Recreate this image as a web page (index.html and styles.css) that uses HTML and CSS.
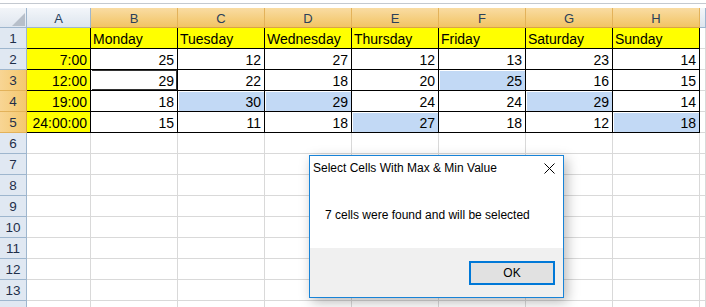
FILE: index.html
```html
<!DOCTYPE html>
<html>
<head>
<meta charset="utf-8">
<link rel="stylesheet" href="styles.css">
</head>
<body>
<div class="top"><div class="line"></div></div>
<div class="sheet">
  <div class="corner"><svg width="13" height="13" viewBox="0 0 13 13"><polygon points="13,0 13,13 0,13" fill="#b7bfca"/></svg></div>
  <div class="ch">A</div><div class="ch on">B</div><div class="ch on">C</div><div class="ch on">D</div><div class="ch on">E</div><div class="ch on">F</div><div class="ch on">G</div><div class="ch on">H</div><div class="ch last"></div>

  <div class="rh">1</div>
  <div class="d y"></div><div class="d y">Monday</div><div class="d y">Tuesday</div><div class="d y">Wednesday</div><div class="d y">Thursday</div><div class="d y">Friday</div><div class="d y">Saturday</div><div class="d y">Sunday</div><div class="c"></div>

  <div class="rh">2</div>
  <div class="d y r">7:00</div><div class="d r">25</div><div class="d r">12</div><div class="d r">27</div><div class="d r">12</div><div class="d r">13</div><div class="d r">23</div><div class="d r">14</div><div class="c"></div>

  <div class="rh on">3</div>
  <div class="d y r">12:00</div><div class="d r act">29</div><div class="d r">22</div><div class="d r">18</div><div class="d r">20</div><div class="d r s">25</div><div class="d r">16</div><div class="d r">15</div><div class="c"></div>

  <div class="rh on">4</div>
  <div class="d y r">19:00</div><div class="d r">18</div><div class="d r s">30</div><div class="d r s">29</div><div class="d r">24</div><div class="d r">24</div><div class="d r s">29</div><div class="d r">14</div><div class="c"></div>

  <div class="rh on">5</div>
  <div class="d y r">24:00:00</div><div class="d r">15</div><div class="d r">11</div><div class="d r">18</div><div class="d r s">27</div><div class="d r">18</div><div class="d r">12</div><div class="d r s">18</div><div class="c"></div>

  <div class="rh">6</div><div class="c"></div><div class="c"></div><div class="c"></div><div class="c"></div><div class="c"></div><div class="c"></div><div class="c"></div><div class="c"></div><div class="c"></div>
  <div class="rh">7</div><div class="c"></div><div class="c"></div><div class="c"></div><div class="c"></div><div class="c"></div><div class="c"></div><div class="c"></div><div class="c"></div><div class="c"></div>
  <div class="rh">8</div><div class="c"></div><div class="c"></div><div class="c"></div><div class="c"></div><div class="c"></div><div class="c"></div><div class="c"></div><div class="c"></div><div class="c"></div>
  <div class="rh">9</div><div class="c"></div><div class="c"></div><div class="c"></div><div class="c"></div><div class="c"></div><div class="c"></div><div class="c"></div><div class="c"></div><div class="c"></div>
  <div class="rh">10</div><div class="c"></div><div class="c"></div><div class="c"></div><div class="c"></div><div class="c"></div><div class="c"></div><div class="c"></div><div class="c"></div><div class="c"></div>
  <div class="rh">11</div><div class="c"></div><div class="c"></div><div class="c"></div><div class="c"></div><div class="c"></div><div class="c"></div><div class="c"></div><div class="c"></div><div class="c"></div>
  <div class="rh">12</div><div class="c"></div><div class="c"></div><div class="c"></div><div class="c"></div><div class="c"></div><div class="c"></div><div class="c"></div><div class="c"></div><div class="c"></div>
  <div class="rh">13</div><div class="c"></div><div class="c"></div><div class="c"></div><div class="c"></div><div class="c"></div><div class="c"></div><div class="c"></div><div class="c"></div><div class="c"></div>
  <div class="rh"></div><div class="c"></div><div class="c"></div><div class="c"></div><div class="c"></div><div class="c"></div><div class="c"></div><div class="c"></div><div class="c"></div><div class="c"></div>
</div>

<div class="dialog">
  <div class="dtitle">
    <span>Select Cells With Max &amp; Min Value</span>
    <svg class="close" width="11" height="11" viewBox="0 0 11 11"><path d="M0.5 0.5 L10.5 10.5 M10.5 0.5 L0.5 10.5" stroke="#000" stroke-width="1" fill="none"/></svg>
  </div>
  <div class="dbody">7 cells were found and will be selected</div>
  <div class="dfoot"><div class="btn">OK</div></div>
</div>
</body>
</html>
```
FILE: styles.css
```css
* { box-sizing: border-box; }
html, body { margin: 0; padding: 0; }
body {
  width: 706px;
  height: 307px;
  overflow: hidden;
  background: #fff;
  font-family: "Liberation Sans", Arial, sans-serif;
  position: relative;
}
.top { height: 8px; padding-top: 3px; }
.top .line { height: 1px; background: #c4c9d0; }

.sheet {
  display: grid;
  grid-template-columns: 27px 64px repeat(7, 87px) 1fr;
  grid-template-rows: 20px repeat(14, 21px);
}
.sheet > div {
  display: flex;
  align-items: flex-end;
  white-space: nowrap;
  overflow: hidden;
  font-size: 14px;
  line-height: 16px;
  color: #000;
  padding: 0 2px 1px 2px;
  border-right: 1px solid #d9d9d9;
  border-bottom: 1px solid #d9d9d9;
}
.sheet > .corner {
  background: linear-gradient(#f2f5f9, #dfe6ef);
  border-right-color: #9eb6ce;
  border-bottom-color: #9eb6ce;
  justify-content: flex-end;
  padding: 0 1px 1px 0;
}
.sheet > .ch {
  background: linear-gradient(#f3f6fa, #dde5ee);
  border-right-color: #9eb6ce;
  border-bottom-color: #9eb6ce;
  justify-content: center;
  align-items: flex-start;
  font-size: 13px;
  line-height: 19px;
  padding: 1px 0 0 0;
  color: #27415f;
}
.sheet > .ch.on {
  background: linear-gradient(#f9dca3, #f2c463);
  border-right-color: #e3b25a;
  border-bottom-color: #d9a347;
  color: #2a3f5a;
}
.sheet > .rh {
  background: #e0e8f2;
  border-right-color: #9eb6ce;
  border-bottom-color: #9eb6ce;
  justify-content: center;
  font-size: 13.5px;
  color: #1f2f4a;
  padding: 0 0 1px 0;
}
.sheet > .rh.on {
  background: linear-gradient(90deg, #f8d594, #f4c86e);
  border-right-color: #d9a347;
  border-bottom-color: #e3b25a;
}
.sheet > .d {
  border-right-color: #000;
  border-bottom-color: #000;
}
.sheet > .y { background: #ffff00; }
.sheet > .r { justify-content: flex-end; padding-right: 3px; }
.sheet > .s {
  background: #c2d9f5;
  box-shadow: inset 1px 1px 0 #fff;
}
.sheet > .act {
  box-shadow: inset 1px 0 0 #fff, inset 0 0 0 1px #333;
}

.dialog {
  position: absolute;
  left: 309px;
  top: 155px;
  width: 255px;
  height: 143px;
  border: 1px solid #1883d7;
  background: #fff;
  box-shadow: 3px 4px 12px rgba(0, 0, 0, 0.28);
  display: flex;
  flex-direction: column;
  font-family: "Liberation Sans", Arial, sans-serif;
  font-size: 12px;
  line-height: 16px;
  color: #000;
}
.dtitle {
  height: 30px;
  padding: 4px 0 0 3px;
  display: flex;
  justify-content: space-between;
  align-items: flex-start;
}
.close { margin: 3px 8px 0 0; }
.dbody {
  height: 62px;
  padding: 21px 0 0 15px;
}
.dfoot {
  flex: 1;
  background: #f0f0f0;
  display: flex;
  justify-content: flex-end;
  padding: 13px 8px 0 0;
}
.btn {
  width: 86px;
  height: 24px;
  border: 2px solid #0078d7;
  background: #e1e1e1;
  display: flex;
  align-items: center;
  justify-content: center;
  font-size: 12px;
}
```
